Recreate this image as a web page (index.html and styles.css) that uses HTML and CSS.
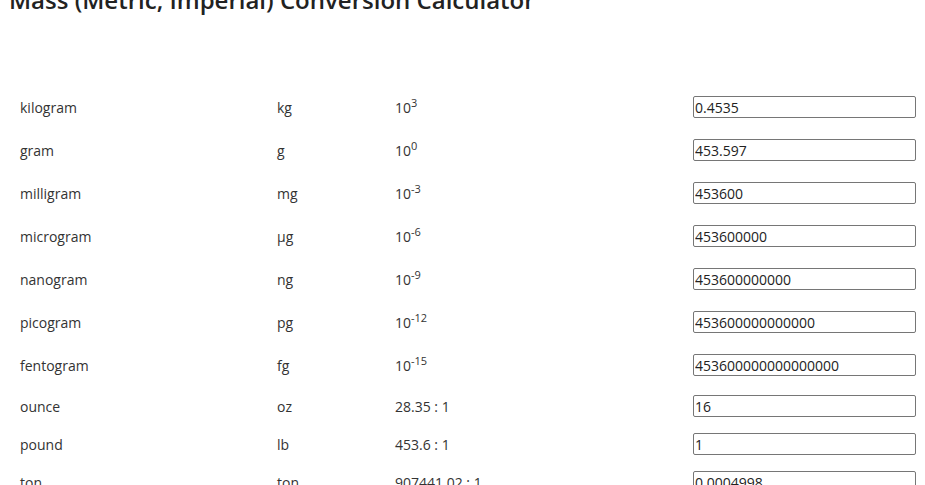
FILE: index.html
```html
<!DOCTYPE html>
<html lang="en">
<head>
    <meta charset="UTF-8">
    <meta name="viewport" content="width=device-width, initial-scale=1.0">
    <title>Mass Conversion Calculator</title>
    <link rel="stylesheet" href="styles.css">
</head>
<body>

    <div class="page">
        <h1 class="title">Mass (Metric, Imperial) Conversion Calculator</h1>

        <table class="units">
            <tr class="exp">
                <td class="name">kilogram</td>
                <td class="abbr">kg</td>
                <td class="factor">10<sup>3</sup></td>
                <td class="value"><input type="text" value="0.4535"></td>
            </tr>
            <tr class="exp">
                <td class="name">gram</td>
                <td class="abbr">g</td>
                <td class="factor">10<sup>0</sup></td>
                <td class="value"><input type="text" value="453.597"></td>
            </tr>
            <tr class="exp">
                <td class="name">milligram</td>
                <td class="abbr">mg</td>
                <td class="factor">10<sup>-3</sup></td>
                <td class="value"><input type="text" value="453600"></td>
            </tr>
            <tr class="exp">
                <td class="name">microgram</td>
                <td class="abbr">µg</td>
                <td class="factor">10<sup>-6</sup></td>
                <td class="value"><input type="text" value="453600000"></td>
            </tr>
            <tr class="exp">
                <td class="name">nanogram</td>
                <td class="abbr">ng</td>
                <td class="factor">10<sup>-9</sup></td>
                <td class="value"><input type="text" value="453600000000"></td>
            </tr>
            <tr class="exp">
                <td class="name">picogram</td>
                <td class="abbr">pg</td>
                <td class="factor">10<sup>-12</sup></td>
                <td class="value"><input type="text" value="453600000000000"></td>
            </tr>
            <tr class="exp">
                <td class="name">fentogram</td>
                <td class="abbr">fg</td>
                <td class="factor">10<sup>-15</sup></td>
                <td class="value"><input type="text" value="453600000000000000"></td>
            </tr>
            <tr>
                <td class="name">ounce</td>
                <td class="abbr">oz</td>
                <td class="factor">28.35 : 1</td>
                <td class="value"><input type="text" value="16"></td>
            </tr>
            <tr>
                <td class="name">pound</td>
                <td class="abbr">lb</td>
                <td class="factor">453.6 : 1</td>
                <td class="value"><input type="text" value="1"></td>
            </tr>
            <tr>
                <td class="name">ton</td>
                <td class="abbr">ton</td>
                <td class="factor">907441.02 : 1</td>
                <td class="value"><input type="text" value="0.0004998"></td>
            </tr>
        </table>
    </div>

</body>
</html>
```

FILE: styles.css
```css
* {
    font-family: "Open Sans", sans-serif;
}
body {
    margin: 0;
    background: #fff;
    color: #333;
}
.page {
    padding: 0 9px;
}
.title {
    font-size: 24px;
    font-weight: 600;
    color: #222;
    margin: -17px 0 0;
    line-height: 33px;
}
.units {
    margin-top: 70px;
    border-collapse: collapse;
    width: 908px;
    font-size: 14px;
}
.units td {
    padding: 8px 11px;
    line-height: 21px;
    vertical-align: middle;
}
.units .exp td {
    padding-top: 10px;
    padding-bottom: 11px;
}
.name {
    width: 235px;
}
.abbr {
    width: 96px;
}
.factor {
    width: 276px;
}
.units .value {
    padding-right: 0;
}
.units input {
    width: 223px;
    height: 22px;
    box-sizing: border-box;
    padding: 0 1px;
    border: 1px solid #767676;
    border-radius: 2px;
    font-size: 14px;
    color: #222;
    margin: 0;
}
sup {
    font-size: 11px;
    line-height: 0;
}
```
